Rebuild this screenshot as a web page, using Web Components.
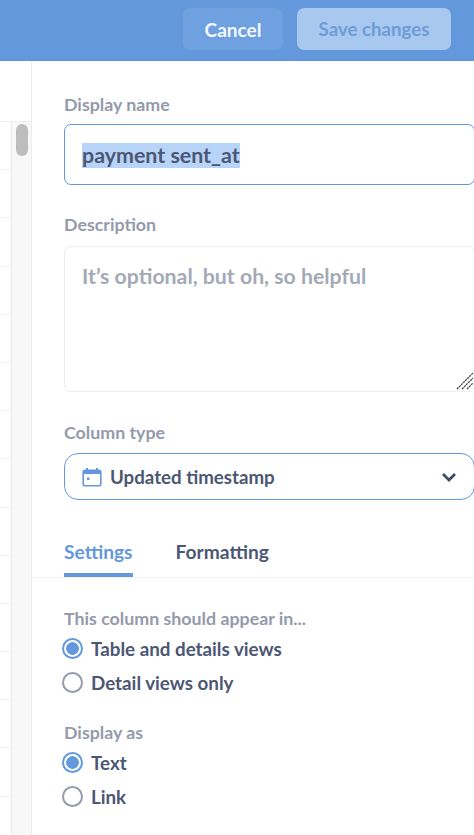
<!DOCTYPE html>
<html>
<head>
<meta charset="utf-8">
<title>Column settings</title>
<style>
  html, body { margin: 0; padding: 0; height: 100%; overflow: hidden; background: #fff; }
  body { font-family: Lato, "Open Sans", sans-serif; display: flex; flex-direction: column; width: 474px; height: 835px; }
  .main { display: flex; flex: 1; min-height: 0; }
</style>
</head>
<body>
<edit-bar>
  <bar-button>Cancel</bar-button>
  <bar-button primary>Save changes</bar-button>
</edit-bar>
<div class="main">
  <table-rail></table-rail>
  <column-form></column-form>
</div>

<script>
// header with the two actions
class EditBar extends HTMLElement {
  constructor() {
    super();
    const shadow = this.attachShadow({ mode: "open" });
    shadow.innerHTML = `
      <style>
        :host {
          display: flex;
          flex: none;
          justify-content: flex-end;
          gap: 14px;
          height: 61px;
          padding: 8px 23px 0 0;
          box-sizing: border-box;
          background: #6398dc;
          border-bottom: 1px solid #5d92d8;
        }
      </style>
      <slot></slot>
    `;
  }
}
customElements.define("edit-bar", EditBar);

class BarButton extends HTMLElement {
  constructor() {
    super();
    const shadow = this.attachShadow({ mode: "open" });
    shadow.innerHTML = `
      <style>
        :host {
          display: flex;
          align-items: center;
          justify-content: center;
          height: 42px;
          width: 100px;
          border-radius: 7px;
          background: #6fa0df;
          color: #f4f8fd;
          font: 700 19px Lato, sans-serif;
        }
        :host([primary]) {
          width: 154px;
          background: #a8c8ef;
          color: #6f9cd8;
          font-size: 18.7px;
        }
      </style>
      <slot></slot>
    `;
  }
}
customElements.define("bar-button", BarButton);

// sliver of the table behind the panel
class TableRail extends HTMLElement {
  constructor() {
    super();
    const shadow = this.attachShadow({ mode: "open" });
    const rows = Array.from({ length: 15 }, () => `<div class="row"></div>`).join("");
    shadow.innerHTML = `
      <style>
        :host {
          display: flex;
          flex-direction: column;
          flex: none;
          width: 32px;
          box-sizing: border-box;
          border-right: 1px solid #ededed;
          overflow: hidden;
        }
        .top { flex: none; height: 61px; border-bottom: 1px solid #ededed; box-sizing: border-box; }
        .body { flex: 1; display: flex; }
        .rows { width: 11px; flex: none; }
        .row { height: 48.2px; box-sizing: border-box; border-bottom: 1px solid #f3f3f3; }
        .track {
          flex: 1;
          background: #f8f8f8;
          border-left: 1px solid #e8e8e8;
          padding: 2px 3px 0 4px;
        }
        .thumb { height: 32px; border-radius: 6px; background: #bdbdbd; }
      </style>
      <div class="top"></div>
      <div class="body">
        <div class="rows">${rows}</div>
        <div class="track"><div class="thumb"></div></div>
      </div>
    `;
  }
}
customElements.define("table-rail", TableRail);

class FieldLabel extends HTMLElement {
  constructor() {
    super();
    const shadow = this.attachShadow({ mode: "open" });
    shadow.innerHTML = `
      <style>
        :host {
          display: block;
          color: #949aab;
          font: 700 17.8px/20px Lato, sans-serif;
        }
      </style>
      <slot></slot>
    `;
  }
}
customElements.define("field-label", FieldLabel);

class RadioOption extends HTMLElement {
  constructor() {
    super();
    const shadow = this.attachShadow({ mode: "open" });
    shadow.innerHTML = `
      <style>
        :host {
          display: flex;
          align-items: center;
          gap: 8px;
          height: 34px;
          margin-left: -2px;
          color: #4c5773;
          font: 700 18.8px Lato, sans-serif;
        }
        .dot {
          box-sizing: border-box;
          width: 21px;
          height: 21px;
          border-radius: 50%;
          border: 2px solid #949aab;
          background: #fff;
        }
        :host([checked]) .dot {
          border-color: #6398dc;
          background: radial-gradient(circle, #6398dc 0 6px, #fff 6.6px);
        }
      </style>
      <span class="dot"></span>
      <slot></slot>
    `;
  }
}
customElements.define("radio-option", RadioOption);

class ColumnForm extends HTMLElement {
  constructor() {
    super();
    const shadow = this.attachShadow({ mode: "open" });
    shadow.innerHTML = `
      <style>
        :host {
          display: block;
          flex: none;
          width: 442px;
          overflow: hidden;
          font-family: Lato, sans-serif;
          color: #4c5773;
        }
        .fields { padding: 33px 0 0 32px; }
        .box {
          box-sizing: border-box;
          width: 411px;
          border: 1.5px solid #6398dc;
          border-radius: 7px;
          background: #fff;
          font-size: 21.4px;
          font-weight: 700;
        }
        .name {
          height: 61px;
          margin: 10px 0 29px;
          padding: 1px 17px 0;
          display: flex;
          align-items: center;
        }
        .name span { background: #b8d4f8; line-height: 25px; }
        .desc {
          position: relative;
          height: 146px;
          margin: 12px 0 30px;
          padding: 15px 17px;
          border-color: #ebeef2;
          color: #a4a9b6;
          font-size: 21.25px;
          line-height: 28px;
        }
        .grip { position: absolute; right: 0; bottom: 1px; }
        .type {
          height: 47px;
          margin-top: 11px;
          padding: 0 17px 0 17px;
          display: flex;
          align-items: center;
          gap: 8px;
          border-radius: 14px;
          font-size: 18.7px;
        }
        .type .label { flex: 1; }
        .tabs {
          display: flex;
          gap: 43px;
          height: 62px;
          margin-top: 16px;
          padding-left: 32px;
          border-bottom: 1px solid #f0f0f2;
          box-sizing: border-box;
          font-size: 19.2px;
          font-weight: 700;
        }
        .tab { padding-top: 24px; box-sizing: border-box; height: 61px; line-height: 24px; }
        .tab.on { color: #6398dc; border-bottom: 4px solid #6398dc; }
        .options { padding: 30px 0 0 32px; }
        .options field-label { margin-bottom: 3px; }
        .group + .group { margin-top: 23px; }
      </style>
      <div class="fields">
        <field-label>Display name</field-label>
        <div class="box name"><span>payment sent_at</span></div>
        <field-label>Description</field-label>
        <div class="box desc">It’s optional, but oh, so helpful
          <svg class="grip" width="18" height="18" viewBox="0 0 18 18" fill="none" stroke="#444" stroke-width="1.3" stroke-dasharray="2.2 .7">
            <path d="M1 17 17 1M6 17 17 6M11 17 17 11"/>
          </svg>
        </div>
        <field-label>Column type</field-label>
        <div class="box type">
          <svg width="20" height="20" viewBox="0 0 20 20" fill="none">
            <rect x="1.2" y="3.2" width="17.6" height="15.6" rx="2" stroke="#6398dc" stroke-width="1.6"/>
            <path d="M1.2 3.5h17.6V7H1.2z" fill="#6398dc"/>
            <path d="M5 1v3M15 1v3" stroke="#6398dc" stroke-width="2"/>
            <rect x="5" y="10.5" width="2.5" height="2.5" fill="#6398dc"/>
          </svg>
          <span class="label">Updated timestamp</span>
          <svg width="16" height="12" viewBox="0 0 16 12" fill="none" stroke="#3f4a63" stroke-width="2.8">
            <path d="M2 3l6 6 6-6"/>
          </svg>
        </div>
      </div>
      <div class="tabs">
        <div class="tab on">Settings</div>
        <div class="tab">Formatting</div>
      </div>
      <div class="options">
        <div class="group">
          <field-label>This column should appear in...</field-label>
          <radio-option checked>Table and details views</radio-option>
          <radio-option>Detail views only</radio-option>
        </div>
        <div class="group">
          <field-label>Display as</field-label>
          <radio-option checked>Text</radio-option>
          <radio-option>Link</radio-option>
        </div>
      </div>
    `;
  }
}
customElements.define("column-form", ColumnForm);
</script>
</body>
</html>
